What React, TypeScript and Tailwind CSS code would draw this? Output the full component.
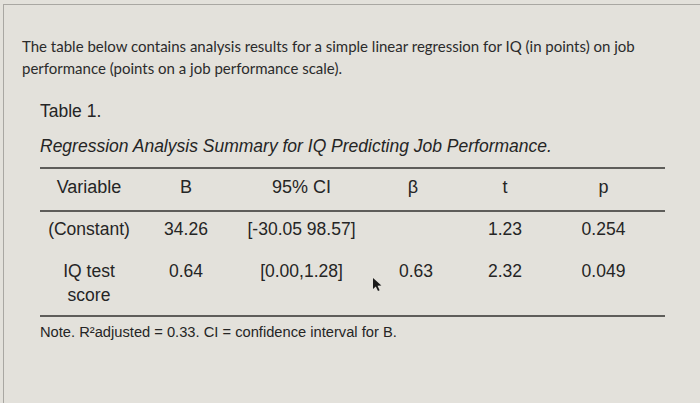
import React from "react";

const rows = [
  { v: ["(Constant)"], b: "34.26", ci: "[-30.05 98.57]", beta: "", t: "1.23", p: "0.254" },
  { v: ["IQ test", "score"], b: "0.64", ci: "[0.00,1.28]", beta: "0.63", t: "2.32", p: "0.049" },
];

const cols = "grid grid-cols-[98px_96px_135px_88px_96px_101px_1fr] text-center";

function Cursor() {
  return (
    <svg className="absolute left-[372px] top-[277px]" width="11" height="15" viewBox="0 0 11 15">
      <path d="M1 1 L1 12 L3.8 9.4 L6 14 L7.6 13.3 L5.5 8.8 L9.4 8.6 Z" fill="#1a1a1a" />
    </svg>
  );
}

export default function App() {
  return (
    <div className="relative w-[700px] h-[403px] overflow-hidden bg-[#e3e1db] pt-1 pl-[3px]">
      <div className="h-full border-t border-l border-[#a9a7a2] pl-[18px] pt-[30px] text-[#252525]">
        <p className="font-['Lato',sans-serif] text-[15px] leading-[22px] text-[#2b2b2b] w-[640px]">
          The table below contains analysis results for a simple linear regression for IQ (in points) on job
          performance (points on a job performance scale).
        </p>

        <div className="pl-[18px] pt-[20px] font-['Liberation_Sans',Arial,sans-serif] w-[643px]">
          <div className="text-[17.5px] leading-[24px]">Table 1.</div>
          <div className="text-[17.5px] leading-[24px] italic mt-[11px]">
            Regression Analysis Summary for IQ Predicting Job Performance.
          </div>

          <div className="mt-[9px] border-t-2 border-[#5e5d5a]" />
          <div className={`${cols} text-[18px] leading-[24px] pt-[6px] pb-[11px]`}>
            <div>Variable</div>
            <div>B</div>
            <div>95% CI</div>
            <div>β</div>
            <div>t</div>
            <div>p</div>
            <div />
          </div>
          <div className="border-t-2 border-[#5e5d5a]" />

          <div className="pt-[5px] pb-[8px] flex flex-col gap-[18px] text-[17.5px] leading-[24px]">
            {rows.map((r, i) => (
              <div key={i} className={cols}>
                <div className="flex flex-col">
                  {r.v.map((x) => (
                    <span key={x}>{x}</span>
                  ))}
                </div>
                <div>{r.b}</div>
                <div>{r.ci}</div>
                <div className="pl-[6px]">{r.beta}</div>
                <div>{r.t}</div>
                <div>{r.p}</div>
                <div />
              </div>
            ))}
          </div>
          <div className="border-t-2 border-[#5e5d5a]" />

          <div className="pt-[5px] text-[14.7px] leading-[20px]">
            Note. R²adjusted = 0.33. CI = confidence interval for B.
          </div>
        </div>
      </div>
      <Cursor />
    </div>
  );
}
